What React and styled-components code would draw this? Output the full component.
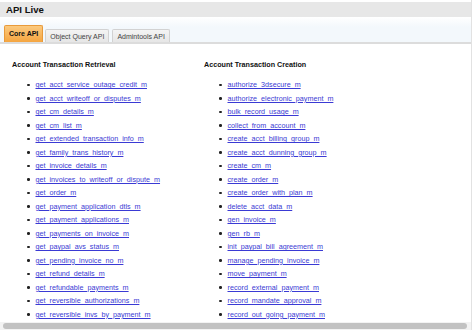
import React from "react";
import styled, { createGlobalStyle } from "styled-components";

const GlobalStyle = createGlobalStyle`
  html, body {
    margin: 0;
    padding: 0;
    background: #ffffff;
    font-family: "Liberation Sans", Arial, sans-serif;
  }
`;

const Frame = styled.div`
  width: 472px;
  height: 330px;
  padding-top: 2px;
  box-sizing: border-box;
  border-right: 1px solid #e2e2e2;
  display: flex;
  flex-direction: column;
  overflow: hidden;
`;

const Header = styled.div`
  height: 15px;
  line-height: 15px;
  background: #e7e7e7;
  padding-left: 6px;
  font-size: 9.6px;
  font-weight: bold;
  color: #111;
`;

const TabStrip = styled.div`
  height: 27px;
  box-sizing: border-box;
  background: linear-gradient(#ffffff 0%, #f3f8fc 40%, #f3f8fc 100%);
  border-bottom: 2px solid #dcdcdc;
  display: flex;
  align-items: flex-end;
  padding-left: 4px;
  gap: 2px;
`;

const Tab = styled.div`
  height: ${(p) => (p.$active ? "17px" : "13px")};
  line-height: ${(p) => (p.$active ? "15px" : "13px")};
  padding: 0 ${(p) => (p.$active ? "4px" : "4px")};
  box-sizing: border-box;
  font-size: 7px;
  font-weight: ${(p) => (p.$active ? "bold" : "normal")};
  color: ${(p) => (p.$active ? "#111" : "#444")};
  background: ${(p) =>
    p.$active
      ? "linear-gradient(#fbc97e, #f5a540)"
      : "linear-gradient(#f4f4f4, #e6e6e6)"};
  border: 1px solid ${(p) => (p.$active ? "#e89a3a" : "#d2d2d2")};
  border-bottom: none;
  border-radius: 2px 2px 0 0;
  margin-right: ${(p) => (p.$gap ? "1px" : "0")};
`;

const Content = styled.div`
  flex: 1;
  display: grid;
  grid-template-columns: 192px 1fr;
  padding: 16px 0 0 12px;
  overflow: hidden;
`;

const Column = styled.div`
  display: flex;
  flex-direction: column;
`;

const Heading = styled.div`
  font-size: 7.2px;
  font-weight: bold;
  line-height: 10px;
  color: #111;
`;

const List = styled.ul`
  list-style: none;
  margin: 8px 0 0 15px;
  padding: 0;
`;

const Item = styled.li`
  display: flex;
  align-items: center;
  gap: 6px;
  height: 13.5px;
  font-size: 7.2px;

  &::before {
    content: "";
    width: 2.5px;
    height: 2.5px;
    border-radius: 50%;
    background: #222;
    flex: none;
  }
`;

const Link = styled.a`
  color: #3a3ad4;
  text-decoration: underline;
`;

const Scrollbar = styled.div`
  height: 8px;
  background: #f3f3f3;
  padding: 1px 4px 1px 3px;
  box-sizing: border-box;
  display: flex;
`;

const Thumb = styled.div`
  flex: 1;
  background: #c2c2c2;
  border-radius: 3px;
`;

const retrieval = [
  "get_acct_service_outage_credit_m",
  "get_acct_writeoff_or_disputes_m",
  "get_cm_details_m",
  "get_cm_list_m",
  "get_extended_transaction_info_m",
  "get_family_trans_history_m",
  "get_invoice_details_m",
  "get_invoices_to_writeoff_or_dispute_m",
  "get_order_m",
  "get_payment_application_dtls_m",
  "get_payment_applications_m",
  "get_payments_on_invoice_m",
  "get_paypal_avs_status_m",
  "get_pending_invoice_no_m",
  "get_refund_details_m",
  "get_refundable_payments_m",
  "get_reversible_authorizations_m",
  "get_reversible_invs_by_payment_m",
];

const creation = [
  "authorize_3dsecure_m",
  "authorize_electronic_payment_m",
  "bulk_record_usage_m",
  "collect_from_account_m",
  "create_acct_billing_group_m",
  "create_acct_dunning_group_m",
  "create_cm_m",
  "create_order_m",
  "create_order_with_plan_m",
  "delete_acct_data_m",
  "gen_invoice_m",
  "gen_rb_m",
  "init_paypal_bill_agreement_m",
  "manage_pending_invoice_m",
  "move_payment_m",
  "record_external_payment_m",
  "record_mandate_approval_m",
  "record_out_going_payment_m",
];

function ApiColumn({ title, items }) {
  return (
    <Column>
      <Heading>{title}</Heading>
      <List>
        {items.map((name) => (
          <Item key={name}>
            <Link href="#">{name}</Link>
          </Item>
        ))}
      </List>
    </Column>
  );
}

export default function App() {
  return (
    <>
      <GlobalStyle />
      <Frame>
        <Header>API Live</Header>
        <TabStrip>
          <Tab $active>Core API</Tab>
          <Tab $gap>Object Query API</Tab>
          <Tab>Admintools API</Tab>
        </TabStrip>
        <Content>
          <ApiColumn title="Account Transaction Retrieval" items={retrieval} />
          <ApiColumn title="Account Transaction Creation" items={creation} />
        </Content>
        <Scrollbar>
          <Thumb />
        </Scrollbar>
      </Frame>
    </>
  );
}
